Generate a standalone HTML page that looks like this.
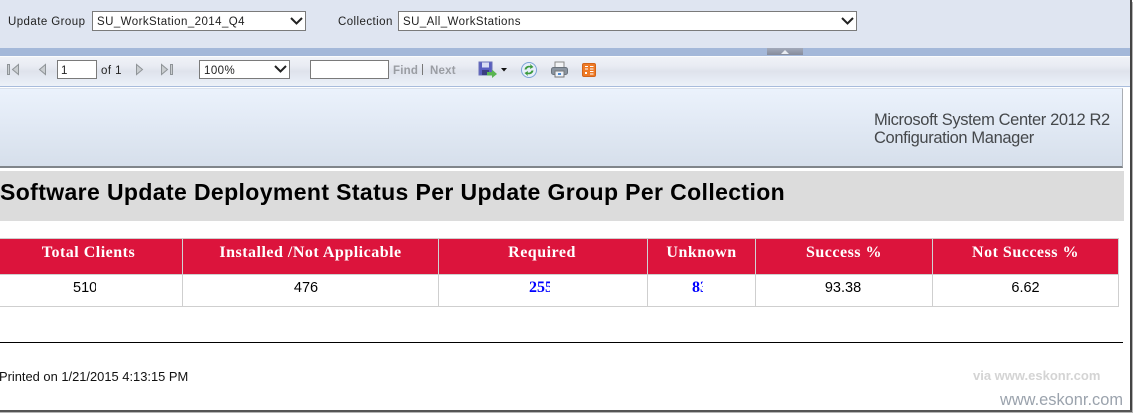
<!DOCTYPE html>
<html><head><meta charset="utf-8"><style>
html,body{margin:0;padding:0;background:#fff}
body{width:1134px;height:414px;overflow:hidden;position:relative;font-family:"Liberation Sans",sans-serif}
.a{position:absolute;white-space:nowrap}
.t{font-size:11.5px;letter-spacing:.43px;color:#222;line-height:14px}
.box{position:absolute;box-sizing:border-box;border:1px solid #7a7a7a;background:#fff}
.cell{position:absolute;box-sizing:border-box;text-align:center}
.h{top:239px;height:35px;background:#dc143c;color:#fff;font:bold 16px/27px "Liberation Serif",serif;letter-spacing:.5px;border-right:1px solid #cfd3d3}
.d{top:275px;height:31px;background:#fff;color:#000;font:14.500px/26px "Liberation Sans",sans-serif;border-right:1px solid #cfcfcf}
.l{position:absolute;overflow:hidden;color:#00f;font:bold 16px/26px "Liberation Serif",serif;top:275px;height:26px}
</style></head><body>
<div class="a" style="left:0;top:0;width:1130px;height:48px;background:#dfe5f1"></div>
<div class="a t" style="left:8px;top:15px">Update Group</div>
<div class="box" style="left:92px;top:11px;width:214px;height:20px"></div>
<div class="a t" style="left:97px;top:15px">SU_WorkStation_2014_Q4</div>
<svg class="a" style="left:290px;top:17px" width="13" height="8"><path d="M1 1L6.500 6.500L12 1" fill="none" stroke="#222" stroke-width="2"/></svg>
<div class="a t" style="left:338px;top:15px">Collection</div>
<div class="box" style="left:398px;top:11px;width:459px;height:20px"></div>
<div class="a t" style="left:403px;top:15px">SU_All_WorkStations</div>
<svg class="a" style="left:841px;top:17px" width="13" height="8"><path d="M1 1L6.500 6.500L12 1" fill="none" stroke="#222" stroke-width="2"/></svg>

<div class="a" style="left:0;top:48px;width:1130px;height:8px;background:#a4b8d9"></div>
<div class="a" style="left:767px;top:48px;width:36px;height:7px;background:linear-gradient(#a3aabb,#868c9c)"></div>
<svg class="a" style="left:781px;top:50px" width="8" height="4"><path d="M0 4L4 0L8 4Z" fill="#e8ecf2"/></svg>
<div class="a" style="left:0;top:56px;width:1130px;height:1px;background:#fbfcfd"></div>
<div class="a" style="left:0;top:57px;width:1130px;height:29px;background:linear-gradient(#f0f2f7 0,#e9ecf3 30%,#dfe3ec 50%,#e5eaf3 75%,#edf1f8 100%)"></div>
<div class="a" style="left:0;top:86px;width:1130px;height:1px;background:#a8bcdc"></div>

<svg class="a" style="left:6px;top:63px" width="170" height="14" fill="#c9cdd0" stroke="#8f9498" stroke-width="1">
<rect x="1.500" y="1.500" width="2" height="10"/><path d="M12.500 1.500V11.500L6.500 6.500Z"/>
<path d="M39.500 1.500V11.500L33.500 6.500Z"/>
<path d="M130.500 1.500V11.500L136.500 6.500Z"/>
<path d="M155.500 1.500V11.500L161.500 6.500Z"/><rect x="164.500" y="1.500" width="2" height="10"/></svg>
<div class="box" style="left:57px;top:60px;width:40px;height:19px"></div>
<div class="a t" style="left:61px;top:64px">1</div>
<div class="a t" style="left:101px;top:64px">of 1</div>
<div class="box" style="left:199px;top:60px;width:91px;height:19px"></div>
<div class="a t" style="left:204px;top:64px">100%</div>
<svg class="a" style="left:274px;top:65px" width="13" height="8"><path d="M1 1L6.500 6.500L12 1" fill="none" stroke="#222" stroke-width="2"/></svg>
<div class="box" style="left:310px;top:60px;width:79px;height:19px"></div>
<div class="a t" style="left:393px;top:64px;color:#9a9da3;font-weight:bold;letter-spacing:.2px">Find</div>
<div class="a" style="left:422px;top:64px;width:1px;height:11px;background:#777"></div>
<div class="a t" style="left:430px;top:64px;color:#9a9da3;font-weight:bold;letter-spacing:.2px">Next</div>

<svg class="a" style="left:478px;top:61px" width="20" height="18">
<rect x="1" y="1" width="13" height="13" fill="#5a5fc0" stroke="#6a70b8"/>
<rect x="4" y="1.500" width="7" height="5" fill="#d8dcf4"/><rect x="4" y="9" width="7" height="5" fill="#3a3e80"/>
<path d="M9 11H14V8.500L19 13L14 17V14.500H9Z" fill="#5ab552"/></svg>
<svg class="a" style="left:501px;top:68px" width="6" height="4"><path d="M0 0H6L3 3.500Z" fill="#111"/></svg>
<svg class="a" style="left:520px;top:61px" width="18" height="18">
<circle cx="9" cy="9" r="7.500" fill="#e6eefa" stroke="#7ba3d6"/>
<path d="M4.500 8.500C5 5.500 8 4 10.500 5L10 3L13.500 6L10 8L10.300 6.500C8.500 6 7 7 6.500 8.500Z" fill="#3c9a3c"/>
<path d="M13.500 9.500C13 12.500 10 14 7.500 13L8 15L4.500 12L8 10L7.700 11.500C9.500 12 11 11 11.500 9.500Z" fill="#3c9a3c"/></svg>
<svg class="a" style="left:551px;top:61px" width="17" height="17">
<rect x="4" y="1" width="9" height="6" fill="#f2f3f5" stroke="#888"/>
<rect x=".5" y="6.500" width="16" height="7" rx="2" fill="#8a94a0" stroke="#6a737d"/>
<rect x="4" y="10" width="9" height="6" fill="#eef2f8" stroke="#777"/><rect x="7" y="12" width="3" height="2" fill="#4d8ad0"/></svg>
<svg class="a" style="left:582px;top:63px" width="14" height="14">
<rect x=".5" y=".5" width="13" height="13" rx="1.500" fill="#ee7a25" stroke="#d2641a"/>
<path d="M3 3.500H6M8 3.500H11.500M8 6H11.500M8 8.500H11.500M8 11H11.500M3 6H6" stroke="#fff" stroke-width="1"/><rect x="3" y="9" width="2" height="2" fill="#fff"/></svg>

<div class="a" style="left:0;top:88px;width:1123px;height:80px;box-sizing:border-box;background:linear-gradient(#ebf2fc,#d6dfeb);border-right:1px solid #a9adb3;border-bottom:2px solid #80858a;border-top:1px solid #d8e0ec"></div>
<div class="a" style="left:874px;top:111px;font-size:16.500px;line-height:18px;letter-spacing:-.38px;color:#45484b">Microsoft System Center 2012 R2<br>Configuration Manager</div>

<div class="a" style="left:0;top:171px;width:1124px;height:50px;background:#dcdcdc"></div>
<div class="a" style="left:0;top:178px;font:bold 23px/28px &quot;Liberation Sans&quot;,sans-serif;color:#000;letter-spacing:.38px">Software Update Deployment Status Per Update Group Per Collection</div>

<div class="a" style="left:0;top:238px;width:1119px;height:1px;background:#cfcfcf"></div>
<div class="a" style="left:0;top:274px;width:1119px;height:1px;background:#cfcfcf"></div>
<div class="a" style="left:0;top:306px;width:1119px;height:1px;background:#cfcfcf"></div>
<div class="cell h" style="left:0;width:183px;padding-right:5px">Total Clients</div>
<div class="cell h" style="left:183px;width:256px">Installed /Not Applicable</div>
<div class="cell h" style="left:439px;width:209px;padding-right:2px">Required</div>
<div class="cell h" style="left:648px;width:108px">Unknown</div>
<div class="cell h" style="left:756px;width:177px">Success %</div>
<div class="cell h" style="left:933px;width:186px">Not Success %</div>
<div class="cell d" style="left:0;width:183px"></div>
<div class="a" style="left:73px;top:275px;width:23px;height:26px;overflow:hidden;font:14.500px/26px &quot;Liberation Sans&quot;,sans-serif;color:#000">510</div>
<div class="cell d" style="left:183px;width:256px;padding-right:9px">476</div>
<div class="cell d" style="left:439px;width:209px"></div>
<div class="cell d" style="left:648px;width:108px"></div>
<div class="l" style="left:529px;width:21px">255</div>
<div class="l" style="left:692px;width:11px">83</div>
<div class="cell d" style="left:756px;width:177px;padding-right:2px">93.38</div>
<div class="cell d" style="left:933px;width:186px">6.62</div>

<div class="a" style="left:0;top:342px;width:1123px;height:1px;background:#000"></div>
<div class="a" style="left:-1px;top:369px;font-size:12.900px;line-height:15px;color:#111">Printed on 1/21/2015 4:13:15 PM</div>
<div class="a" style="left:973px;top:369px;font:bold 13px/14px &quot;Liberation Sans&quot;,sans-serif;color:#d4d4d4">via www.eskonr.com</div>
<div class="a" style="left:1000px;top:391px;font-size:16.400px;line-height:18px;color:#9ba3ad">www.eskonr.com</div>

<div class="a" style="left:1130px;top:0;width:2px;height:412px;background:#444"></div>
<div class="a" style="left:1132px;top:2px;width:1px;height:410px;background:#b5b5b5"></div>
<div class="a" style="left:0;top:410px;width:1132px;height:2px;background:#555"></div>
<div class="a" style="left:0;top:412px;width:1133px;height:1px;background:#b5b5b5"></div>
</body></html>
